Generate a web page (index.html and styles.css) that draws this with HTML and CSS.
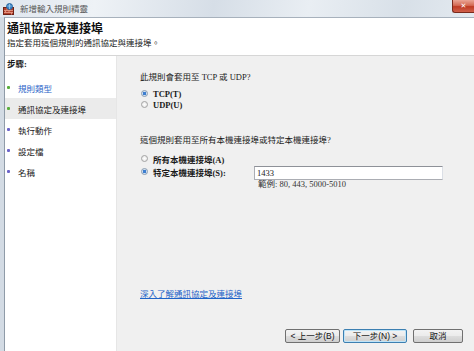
FILE: index.html
```html
<!DOCTYPE html>
<html lang="zh-Hant">
<head>
    <meta charset="UTF-8">
    <title>新增輸入規則精靈</title>
    <link rel="stylesheet" href="styles.css">
</head>
<body>

<div class="window">
    <div class="titlebar">
        <svg class="app-icon" width="11" height="12" viewBox="0 0 11 12">
            <rect x="0.5" y="4.5" width="10" height="7" fill="#b2402c" stroke="#6e2216"/>
            <path d="M1 7.5h9M1 9.5h9M4 5v2.5M7 5v2.5M2.5 7.5v2M6 7.5v2M8.5 9.5v2" stroke="#e9a08e" stroke-width="0.8"/>
            <circle cx="6.5" cy="3.5" r="3" fill="#3f86c9" stroke="#1f5d96" stroke-width="0.8"/>
            <path d="M4.5 3h4M6.5 1v5" stroke="#a6d8f5" stroke-width="0.7"/>
        </svg>
        <span class="title">新增輸入規則精靈</span>
        <span class="close">✕</span>
    </div>

    <div class="client">
        <div class="header">
            <h1>通訊協定及連接埠</h1>
            <p>指定套用這個規則的通訊協定與連接埠。</p>
        </div>

        <div class="main">
            <div class="steps">
                <div class="steps-title">步驟:</div>
                <div class="step done"><span class="dot"></span><a href="#">規則類型</a></div>
                <div class="step current"><span class="dot"></span>通訊協定及連接埠</div>
                <div class="step"><span class="dot"></span>執行動作</div>
                <div class="step"><span class="dot"></span>設定檔</div>
                <div class="step"><span class="dot"></span>名稱</div>
            </div>

            <div class="pane">
                <div class="question">此規則會套用至 TCP 或 UDP?</div>
                <div class="radios">
                    <div class="radio-row"><span class="radio checked"></span>TCP(T)</div>
                    <div class="radio-row"><span class="radio"></span>UDP(U)</div>
                </div>

                <div class="question q2">這個規則套用至所有本機連接埠或特定本機連接埠?</div>
                <div class="radios ports">
                    <div class="radio-row"><span class="radio"></span>所有本機連接埠(A)</div>
                    <div class="port-row">
                        <div class="radio-row port-label"><span class="radio checked"></span>特定本機連接埠(S):</div>
                        <div class="port-field">
                            <div class="textbox">1433</div>
                            <div class="example">範例: 80, 443, 5000-5010</div>
                        </div>
                    </div>
                </div>

                <a class="more" href="#">深入了解通訊協定及連接埠</a>

                <div class="buttons">
                    <button class="btn">&lt; 上一步(B)</button>
                    <button class="btn default">下一步(N) &gt;</button>
                    <button class="btn cancel">取消</button>
                </div>
            </div>
        </div>
    </div>
</div>

</body>
</html>
```

FILE: styles.css
```css
html, body {
    margin: 0;
    padding: 0;
}

body {
    width: 474px;
    height: 351px;
    overflow: hidden;
    background-color: #d3dbe4;
    font-family: "Liberation Serif", "Noto Sans CJK TC", serif;
    color: #1a1a1a;
}

.window {
    display: flex;
    flex-direction: column;
    height: 351px;
}

/* title bar */
.titlebar {
    height: 17px;
    display: flex;
    align-items: center;
    padding-left: 3px;
    background: linear-gradient(100deg, #dfe6ee 0%, #eef2f6 20%, #d6dee7 45%, #e9eef3 65%, #d8e0e8 85%, #e4eaf0 100%);
}

.app-icon {
    flex-shrink: 0;
}

.title {
    margin-left: 6px;
    font-family: "Liberation Sans", "Noto Sans CJK TC", sans-serif;
    font-size: 8.5px;
    line-height: 12px;
    color: #555;
}

.close {
    margin-left: auto;
    align-self: flex-start;
    width: 22px;
    height: 13px;
    box-sizing: border-box;
    border: 1px solid #7a2a1c;
    border-top: none;
    border-right: none;
    border-radius: 0 0 0 3px;
    background: linear-gradient(#eaa595 0%, #d46a54 45%, #bf3b24 55%, #d0604a 100%);
    color: #fff;
    font-family: "DejaVu Sans", sans-serif;
    font-size: 7px;
    font-weight: bold;
    line-height: 12px;
    text-align: center;
}

/* client area */
.client {
    flex: 1;
    display: flex;
    flex-direction: column;
    margin-left: 4px;
    border-left: 1px solid #8f9ba8;
    border-top: 1px solid #a7b1bc;
    background-color: #f0f0f0;
}

.header {
    height: 37px;
    padding-left: 2px;
    background-color: #fff;
    border-bottom: 1px solid #d6d6d6;
}

.header h1 {
    margin: 4px 0 0 0;
    font-size: 12px;
    line-height: 14px;
    font-weight: bold;
    color: #111;
}

.header p {
    margin: 1px 0 0 0;
    font-size: 8.5px;
    line-height: 12px;
    color: #222;
}

.main {
    flex: 1;
    display: flex;
}

/* steps list */
.steps {
    width: 111px;
    background-color: #fff;
    border-right: 1px solid #e6e6e6;
    font-size: 8.5px;
}

.steps-title {
    padding-left: 2px;
    font-weight: bold;
    line-height: 16px;
    margin-bottom: 5px;
}

.step {
    height: 21px;
    display: flex;
    align-items: center;
    gap: 8px;
    padding-left: 2px;
    color: #222;
}

.step a {
    color: #2a64c8;
    text-decoration: none;
}

.step.current {
    background-color: #ebebeb;
}

.dot {
    width: 3px;
    height: 3px;
    border-radius: 1px;
    background-color: #6b63c9;
}

.step.done .dot,
.step.current .dot {
    background-color: #5aae3c;
}

/* right pane */
.pane {
    flex: 1;
    display: flex;
    flex-direction: column;
    padding-left: 23px;
    font-size: 8.5px;
}

.question {
    margin-top: 14px;
    line-height: 14px;
}

.q2 {
    margin-top: 23px;
}

.radios {
    margin-top: 4px;
}

.radio-row {
    display: flex;
    align-items: center;
    gap: 5px;
    height: 11px;
    font-weight: bold;
}

.ports {
    margin-top: 5px;
}

.ports .radio-row {
    height: 13px;
}

.radio {
    width: 7px;
    height: 7px;
    margin-left: 1px;
    box-sizing: border-box;
    border: 1px solid #a3a3a3;
    border-radius: 50%;
    background: radial-gradient(#ffffff, #e2e2e2);
}

.radio.checked {
    background: radial-gradient(circle, #3d7ed0 0 1.6px, #cfe0f2 2px);
    border-color: #8a9cb0;
}

.port-row {
    display: flex;
    align-items: flex-start;
}

.port-label {
    width: 114px;
    flex-shrink: 0;
}

.port-field {
    margin-top: 1px;
}

.textbox {
    width: 189px;
    height: 14px;
    box-sizing: border-box;
    padding-left: 2px;
    background-color: #fff;
    border: 1px solid #abadb3;
    border-top-color: #8e9198;
    border-right-color: #dbdfe6;
    font-size: 8.5px;
    line-height: 12px;
}

.example {
    margin-top: 0;
    padding-left: 4px;
    line-height: 8px;
    color: #333;
}

.more {
    margin-top: auto;
    align-self: flex-start;
    line-height: 12px;
    color: #1f64c8;
}

.buttons {
    display: flex;
    justify-content: flex-end;
    gap: 3px;
    margin-top: 29px;
    margin-bottom: 8px;
    padding-right: 11px;
}

.btn {
    height: 14px;
    width: 55px;
    padding: 0;
    box-sizing: border-box;
    border: 1px solid #707070;
    border-radius: 2px;
    background: linear-gradient(#f3f3f3 0%, #ebebeb 50%, #dddddd 51%, #cfcfcf 100%);
    font-family: "Liberation Sans", "Noto Sans CJK TC", sans-serif;
    font-size: 8.5px;
    line-height: 12px;
    color: #111;
}

.btn.default {
    width: 64px;
    border-color: #3c7fb1;
    box-shadow: inset 0 0 0 1px #bfe4f8;
}

.btn.cancel {
    width: 50px;
    margin-left: 3px;
}
```
